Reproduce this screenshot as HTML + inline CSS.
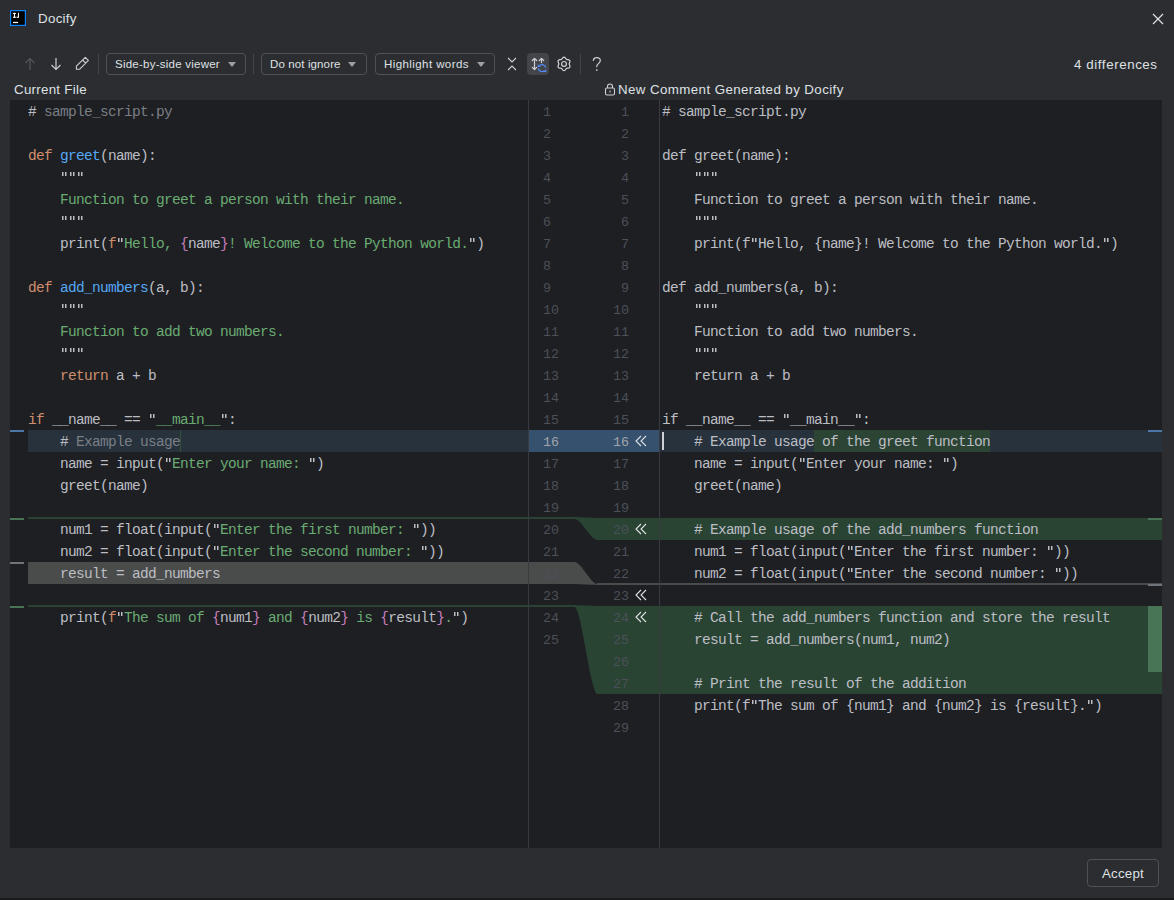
<!DOCTYPE html>
<html><head><meta charset="utf-8"><title>Docify</title>
<style>
html,body{margin:0;padding:0;}
body{width:1174px;height:900px;overflow:hidden;background:#2B2D30;position:relative;font-family:"Liberation Sans",sans-serif;color:#DFE1E5;}
.a{position:absolute;}
.ui{position:absolute;font-size:13.33px;line-height:15px;white-space:nowrap;color:#DFE1E5;}
.dd{position:absolute;top:53px;height:20px;border:1px solid #4E5157;border-radius:4px;box-sizing:content-box;}
.dd span{position:absolute;top:2.5px;left:8px;font-size:11.5px;line-height:14px;letter-spacing:0.24px;white-space:nowrap;color:#DFE1E5;}
.dd b{position:absolute;top:8px;width:0;height:0;border-left:4.5px solid transparent;border-right:4.5px solid transparent;border-top:5px solid #9DA0A8;}
.sep{position:absolute;width:1px;background:#43454A;}
#ed{position:absolute;left:10px;top:100px;width:1152px;height:748px;background:#1E1F22;overflow:hidden;}
pre{margin:0;position:absolute;padding-top:1px;font-family:"Liberation Mono",monospace;font-size:14.5px;letter-spacing:-0.7px;line-height:22px;white-space:pre;color:#BCBEC4;}
.k{color:#CF8E6D}.fn{color:#56A8F5}.s{color:#6AAB73}.c{color:#7A7E85}.br{color:#C77DBB}.h{color:#BCBEC4}
.lnl,.lnr{position:absolute;padding-top:2px;font-family:"Liberation Mono",monospace;font-size:13.33px;line-height:22px;color:#4B5059;white-space:pre;}
.lnl{left:0;}
.lnr{right:0;text-align:right;}

.q{display:inline-block;width:8px;height:22px;vertical-align:top;color:transparent;background:linear-gradient(#BCBEC4,#BCBEC4) 2px 5px/1.5px 4.2px no-repeat,linear-gradient(#BCBEC4,#BCBEC4) 4.6px 5px/1.5px 4.2px no-repeat;}

</style></head><body>
<!-- title bar -->
<svg class="a" style="left:8px;top:8px" width="20" height="20" viewBox="0 0 20 20"><rect x="2.6" y="2.6" width="14.8" height="14.8" fill="#000" stroke="#0B84FF" stroke-width="1.2"/><g fill="#fff"><rect x="4.9" y="4.9" width="3" height="1.1"/><rect x="5.9" y="4.9" width="1.1" height="4.9"/><rect x="4.9" y="8.7" width="3" height="1.1"/><rect x="9.9" y="4.9" width="1.1" height="4.6"/><rect x="8.5" y="8.7" width="2.2" height="1.1"/><rect x="5" y="13.9" width="5.1" height="1.2"/></g></svg>
<div class="ui" style="left:38px;top:11px;letter-spacing:0.3px">Docify</div>
<svg class="a" style="left:1150px;top:11px" width="16" height="16" viewBox="0 0 16 16"><path d="M3 3L13 13M13 3L3 13" stroke="#DFE1E5" stroke-width="1.2" fill="none"/></svg>

<!-- toolbar -->
<svg class="a" style="left:22px;top:56px" width="16" height="16" viewBox="0 0 16 16"><path d="M8 2.5V14M3.5 7L8 2.5L12.5 7" stroke="#55575C" stroke-width="1.2" fill="none"/></svg>
<svg class="a" style="left:48px;top:56px" width="16" height="16" viewBox="0 0 16 16"><path d="M8 2V13.5M3.5 9L8 13.5L12.5 9" stroke="#CED0D6" stroke-width="1.2" fill="none"/></svg>
<svg class="a" style="left:71px;top:53px" width="22" height="22" viewBox="0 0 22 22"><path d="M5.4 16.3L5.4 13.2L14.3 4.3L17.4 7.4L8.5 16.3Z M11.6 7L14.7 10.1" stroke="#CED0D6" stroke-width="1.1" fill="none" stroke-linejoin="round"/></svg>
<div class="sep" style="left:98px;top:54px;height:20px"></div>
<div class="dd" style="left:106px;width:138px"><span>Side-by-side viewer</span><b style="left:121px"></b></div>
<div class="sep" style="left:253px;top:54px;height:20px"></div>
<div class="dd" style="left:261px;width:104px"><span style="letter-spacing:0.12px">Do not ignore</span><b style="left:86px"></b></div>
<div class="dd" style="left:375px;width:118px"><span style="letter-spacing:0.42px">Highlight words</span><b style="left:101px"></b></div>
<svg class="a" style="left:504px;top:56px" width="16" height="16" viewBox="0 0 16 16"><path d="M4 2L8 6L12 2M4 14L8 10L12 14" stroke="#CED0D6" stroke-width="1.1" fill="none"/></svg>
<div class="a" style="left:527px;top:53px;width:22px;height:22px;border-radius:4px;background:#43454A"></div>
<svg class="a" style="left:527px;top:53px" width="22" height="22" viewBox="0 0 22 22"><g stroke="#CED0D6" stroke-width="1.2" fill="none" stroke-linecap="round" stroke-linejoin="round"><path d="M7.5 5.3V16.5M5.3 7.5L7.5 5.3L9.7 7.5M5.3 14.3L7.5 16.5L9.7 14.3M14.5 5.3V9.6M12.3 7.5L14.5 5.3L16.7 7.5"/></g><g stroke="#548AF7" stroke-width="1.3" fill="none"><path d="M12.6 12.5A3.7 3.7 0 0 1 18.7 14.6"/><path d="M11.4 15.3A3.7 3.7 0 0 0 17.4 17.7"/></g><path d="M10.7 10.9L10.7 14.1L13.9 14.1Z M19.3 15.9L19.3 19.1L16.1 19.1Z" fill="#548AF7"/></svg>
<svg class="a" style="left:553px;top:53px" width="22" height="22" viewBox="0 0 22 22"><path d="M11.00 4.20 L11.58 4.33 L12.10 4.67 L12.54 5.15 L12.91 5.66 L13.24 6.10 L13.60 6.40 L14.04 6.56 L14.58 6.63 L15.21 6.69 L15.85 6.83 L16.41 7.11 L16.80 7.55 L16.98 8.11 L16.94 8.74 L16.75 9.36 L16.49 9.93 L16.28 10.44 L16.20 10.90 L16.28 11.36 L16.49 11.87 L16.75 12.44 L16.94 13.06 L16.98 13.69 L16.80 14.25 L16.41 14.69 L15.85 14.97 L15.21 15.11 L14.58 15.17 L14.04 15.24 L13.60 15.40 L13.24 15.70 L12.91 16.14 L12.54 16.65 L12.10 17.13 L11.58 17.47 L11.00 17.60 L10.42 17.47 L9.90 17.13 L9.46 16.65 L9.09 16.14 L8.76 15.70 L8.40 15.40 L7.96 15.24 L7.42 15.17 L6.79 15.11 L6.15 14.97 L5.59 14.69 L5.20 14.25 L5.02 13.69 L5.06 13.06 L5.25 12.44 L5.51 11.87 L5.72 11.36 L5.80 10.90 L5.72 10.44 L5.51 9.93 L5.25 9.36 L5.06 8.74 L5.02 8.11 L5.20 7.55 L5.59 7.11 L6.15 6.83 L6.79 6.69 L7.42 6.63 L7.96 6.56 L8.40 6.40 L8.76 6.10 L9.09 5.66 L9.46 5.15 L9.90 4.67 L10.42 4.33 L11.00 4.20Z" stroke="#CED0D6" stroke-width="1.2" fill="none"/><circle cx="11" cy="10.9" r="2.4" stroke="#CED0D6" stroke-width="1.2" fill="none"/></svg>
<div class="sep" style="left:580px;top:54px;height:20px"></div>
<svg class="a" style="left:586px;top:53px" width="22" height="22" viewBox="0 0 22 22"><path d="M7.3 7.3C7.6 5.5 9 4.6 10.8 4.6C12.8 4.6 14.3 5.9 14.3 7.6C14.3 9.2 13.2 10 12.2 10.9C11.2 11.8 10.7 12.5 10.7 13.7" stroke="#CED0D6" stroke-width="1.2" fill="none" stroke-linecap="round"/><rect x="10" y="16.3" width="1.5" height="1.5" fill="#CED0D6"/></svg>
<div class="ui" style="left:1074px;top:57px;letter-spacing:0.58px">4 differences</div>

<!-- headers -->
<div class="ui" style="left:14px;top:82px;letter-spacing:0.27px">Current File</div>
<svg class="a" style="left:603px;top:82px" width="14" height="14" viewBox="0 0 14 14"><rect x="2.5" y="6" width="9" height="7" rx="1.5" stroke="#CED0D6" stroke-width="1.1" fill="none"/><path d="M4.5 6V4.5A2.5 2.5 0 0 1 9.5 4.5V6" stroke="#CED0D6" stroke-width="1.1" fill="none"/><rect x="6.5" y="8.5" width="1" height="2" fill="#CED0D6"/></svg>
<div class="ui" style="left:618px;top:82px;letter-spacing:0.4px">New Comment Generated by Docify</div>

<!-- editor -->
<div id="ed"></div>
<!-- row highlights (page coords) -->
<div class="a" style="left:28px;top:430px;width:500px;height:22px;background:#27323D"></div>
<div class="a" style="left:529px;top:430px;width:130px;height:22px;background:#36516D"></div>
<div class="a" style="left:660px;top:430px;width:502px;height:22px;background:#27323D"></div>
<div class="a" style="left:814px;top:430px;width:176px;height:22px;background:#2C4434"></div>
<div class="a" style="left:180px;top:430px;width:1px;height:22px;background:#30523A"></div>
<div class="a" style="left:28px;top:517px;width:547px;height:2px;background:#2A4434"></div>
<div class="a" style="left:28px;top:562px;width:547px;height:22px;background:#4A4C4B"></div>
<div class="a" style="left:28px;top:605px;width:547px;height:2px;background:#2A4434"></div>
<div class="a" style="left:597px;top:518px;width:565px;height:22px;background:#2A4434"></div>
<div class="a" style="left:597px;top:583px;width:565px;height:2px;background:#4A4C4B"></div>
<div class="a" style="left:597px;top:606px;width:565px;height:88px;background:#2A4434"></div>
<svg class="a" style="left:0;top:0" width="1174" height="900">
<path d="M574.5 517 C581.40 517 590.60 518 597.5 518 L597.5 540 C590.60 540 581.40 519 574.5 519 Z" fill="#2A4434"/>
<path d="M574.5 562 C581.40 562 590.60 584 597.5 584 L597.5 585 C590.60 585 581.40 584 574.5 584 Z" fill="#4A4C4B"/>
<path d="M574.5 605 C581.40 605 590.60 606 597.5 606 L597.5 694 C590.60 694 581.40 607 574.5 607 Z" fill="#2A4434"/>
</svg>
<!-- markers -->
<div class="a" style="left:10px;top:430px;width:14px;height:2px;background:#4A76A8"></div>
<div class="a" style="left:10px;top:518px;width:14px;height:2px;background:#477555"></div>
<div class="a" style="left:10px;top:562px;width:14px;height:2px;background:#6F737A"></div>
<div class="a" style="left:10px;top:606px;width:14px;height:2px;background:#477555"></div>
<div class="a" style="left:1148px;top:430px;width:14px;height:2px;background:#4A76A8"></div>
<div class="a" style="left:1148px;top:518px;width:14px;height:2px;background:#477555"></div>
<div class="a" style="left:1148px;top:584px;width:14px;height:2px;background:#6F737A"></div>
<div class="a" style="left:1148px;top:606px;width:14px;height:66px;background:#477555"></div>
<!-- dividers -->
<div class="a" style="left:528px;top:100px;width:1px;height:748px;background:#393B40"></div>
<div class="a" style="left:659px;top:100px;width:1px;height:748px;background:#393B40"></div>
<!-- line numbers -->
<div class="a" style="left:543px;top:100px;width:40px;height:748px"><div class="lnl" style="top:0px">1</div><div class="lnl" style="top:22px">2</div><div class="lnl" style="top:44px">3</div><div class="lnl" style="top:66px">4</div><div class="lnl" style="top:88px">5</div><div class="lnl" style="top:110px">6</div><div class="lnl" style="top:132px">7</div><div class="lnl" style="top:154px">8</div><div class="lnl" style="top:176px">9</div><div class="lnl" style="top:198px">10</div><div class="lnl" style="top:220px">11</div><div class="lnl" style="top:242px">12</div><div class="lnl" style="top:264px">13</div><div class="lnl" style="top:286px">14</div><div class="lnl" style="top:308px">15</div><div class="lnl" style="top:330px;color:#A1A3AB">16</div><div class="lnl" style="top:352px">17</div><div class="lnl" style="top:374px">18</div><div class="lnl" style="top:396px">19</div><div class="lnl" style="top:418px">20</div><div class="lnl" style="top:440px">21</div><div class="lnl" style="top:462px">22</div><div class="lnl" style="top:484px">23</div><div class="lnl" style="top:506px">24</div><div class="lnl" style="top:528px">25</div></div>
<div class="a" style="left:589px;top:100px;width:40px;height:748px"><div class="lnr" style="top:0px">1</div><div class="lnr" style="top:22px">2</div><div class="lnr" style="top:44px">3</div><div class="lnr" style="top:66px">4</div><div class="lnr" style="top:88px">5</div><div class="lnr" style="top:110px">6</div><div class="lnr" style="top:132px">7</div><div class="lnr" style="top:154px">8</div><div class="lnr" style="top:176px">9</div><div class="lnr" style="top:198px">10</div><div class="lnr" style="top:220px">11</div><div class="lnr" style="top:242px">12</div><div class="lnr" style="top:264px">13</div><div class="lnr" style="top:286px">14</div><div class="lnr" style="top:308px">15</div><div class="lnr" style="top:330px;color:#A1A3AB">16</div><div class="lnr" style="top:352px">17</div><div class="lnr" style="top:374px">18</div><div class="lnr" style="top:396px">19</div><div class="lnr" style="top:418px">20</div><div class="lnr" style="top:440px">21</div><div class="lnr" style="top:462px">22</div><div class="lnr" style="top:484px">23</div><div class="lnr" style="top:506px">24</div><div class="lnr" style="top:528px">25</div><div class="lnr" style="top:550px">26</div><div class="lnr" style="top:572px">27</div><div class="lnr" style="top:594px">28</div><div class="lnr" style="top:616px">29</div></div>
<!-- arrows -->
<svg class="a" style="left:0;top:0" width="1174" height="900">
<g stroke="#DFE1E5" stroke-width="1.1" fill="none">
<path d="M641 436L636 441L641 446M646 436L641 441L646 446"/>
<path d="M641 524L636 529L641 534M646 524L641 529L646 534"/>
<path d="M641 590L636 595L641 600M646 590L641 595L646 600"/>
<path d="M641 612L636 617L641 622M646 612L641 617L646 622"/>
</g></svg>
<!-- caret -->
<div class="a" style="left:662px;top:432px;width:2px;height:18px;background:#CED0D6"></div>
<!-- code -->
<pre style="left:28px;top:100px"><span class="h">#</span><span class="c"> sample_script.py</span>

<span class="k">def</span> <span class="fn">greet</span>(name):
    <span class="s"><span class="q">"</span><span class="q">"</span><span class="q">"</span></span>
    <span class="s">Function to greet a person with their name.</span>
    <span class="s"><span class="q">"</span><span class="q">"</span><span class="q">"</span></span>
    print(<span class="k">f</span><span class="s"><span class="q">"</span>Hello, </span><span class="br">{</span>name<span class="br">}</span><span class="s">! Welcome to the Python world.<span class="q">"</span></span>)

<span class="k">def</span> <span class="fn">add_numbers</span>(a, b):
    <span class="s"><span class="q">"</span><span class="q">"</span><span class="q">"</span></span>
    <span class="s">Function to add two numbers.</span>
    <span class="s"><span class="q">"</span><span class="q">"</span><span class="q">"</span></span>
    <span class="k">return</span> a + b

<span class="k">if</span> __name__ == <span class="s"><span class="q">"</span>__main__<span class="q">"</span></span>:
    <span class="h">#</span><span class="c"> Example usage</span>
    name = input(<span class="s"><span class="q">"</span>Enter your name: <span class="q">"</span></span>)
    greet(name)

    num1 = float(input(<span class="s"><span class="q">"</span>Enter the first number: <span class="q">"</span></span>))
    num2 = float(input(<span class="s"><span class="q">"</span>Enter the second number: <span class="q">"</span></span>))
    result = add_numbers

    print(<span class="k">f</span><span class="s"><span class="q">"</span>The sum of </span><span class="br">{</span>num1<span class="br">}</span><span class="s"> and </span><span class="br">{</span>num2<span class="br">}</span><span class="s"> is </span><span class="br">{</span>result<span class="br">}</span><span class="s">.<span class="q">"</span></span>)
</pre>
<pre style="left:662px;top:100px"># sample_script.py

def greet(name):
    <span class="q">"</span><span class="q">"</span><span class="q">"</span>
    Function to greet a person with their name.
    <span class="q">"</span><span class="q">"</span><span class="q">"</span>
    print(f<span class="q">"</span>Hello, {name}! Welcome to the Python world.<span class="q">"</span>)

def add_numbers(a, b):
    <span class="q">"</span><span class="q">"</span><span class="q">"</span>
    Function to add two numbers.
    <span class="q">"</span><span class="q">"</span><span class="q">"</span>
    return a + b

if __name__ == <span class="q">"</span>__main__<span class="q">"</span>:
    # Example usage of the greet function
    name = input(<span class="q">"</span>Enter your name: <span class="q">"</span>)
    greet(name)

    # Example usage of the add_numbers function
    num1 = float(input(<span class="q">"</span>Enter the first number: <span class="q">"</span>))
    num2 = float(input(<span class="q">"</span>Enter the second number: <span class="q">"</span>))

    # Call the add_numbers function and store the result
    result = add_numbers(num1, num2)

    # Print the result of the addition
    print(f<span class="q">"</span>The sum of {num1} and {num2} is {result}.<span class="q">"</span>)
</pre>

<!-- bottom -->
<div class="a" style="left:1087px;top:859px;width:70px;height:26px;border:1px solid #4E5157;border-radius:4px;"></div>
<div class="ui" style="left:1102px;top:866px;letter-spacing:0.2px">Accept</div>
<div class="a" style="left:0;top:898px;width:1174px;height:2px;background:#1A1B1D"></div>

</body></html>
